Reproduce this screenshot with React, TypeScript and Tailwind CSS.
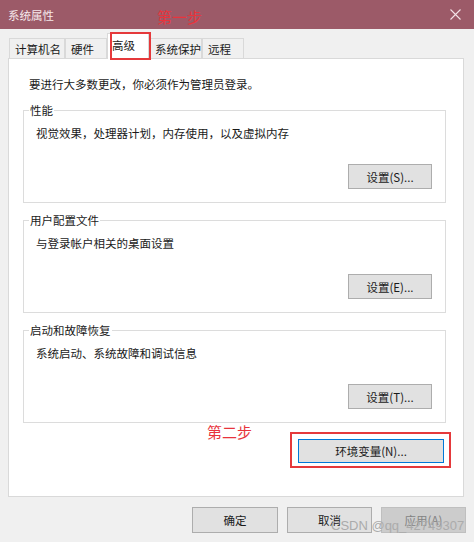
import React from "react";

const FONT = "font-['Noto_Sans_CJK_SC','Microsoft_YaHei',sans-serif]";

function Tab({ label, w, selected }: { label: string; w: string; selected?: boolean }) {
  if (selected) {
    return (
      <div
        className={`relative z-10 -mb-px h-[26px] ${w} bg-white border border-b-0 border-[#d9d9d9] pl-[4px] flex items-center pb-[3px]`}
      >
        <span>{label}</span>
        <div className="absolute left-[2px] -top-[2px] w-[41px] h-[28px] border-2 border-[#e5393b]" />
      </div>
    );
  }
  return (
    <div className={`h-[20px] ${w} bg-[#f0f0f0] border border-b-0 border-[#d9d9d9] pl-[5px] flex items-center`}>
      <span>{label}</span>
    </div>
  );
}

function WinButton({ label, className = "" }: { label: string; className?: string }) {
  return (
    <button
      type="button"
      className={`h-[25px] w-[84px] bg-[#e1e1e1] border border-[#adadad] text-[11.5px] leading-[16px] text-[#1a1a1a] flex items-center justify-center ${className}`}
    >
      {label}
    </button>
  );
}

function GroupBox({ title, text, button, className = "" }: { title: string; text: string; button: string; className?: string }) {
  return (
    <fieldset className={`w-[423px] border border-[#dcdcdc] pb-[13px] flex flex-col ${className}`}>
      <legend className="ml-[5px] px-[1px] leading-[16px]">{title}</legend>
      <p className="mt-[7px] pl-[12px] leading-[16px]">{text}</p>
      <div className="mt-[23px] flex justify-end pr-[13px]">
        <WinButton label={button} />
      </div>
    </fieldset>
  );
}

export default function App() {
  return (
    <div className={`relative w-[474px] h-[542px] overflow-hidden bg-[#f0f0f0] text-[11.5px] text-[#1a1a1a] ${FONT}`}>
      {/* Title bar */}
      <div className="h-[29px] bg-[#9c5a68] flex items-center justify-between pl-[8px] pr-[12px]">
        <span className="text-[#f6e9ec] text-[11.5px] leading-[16px]">系统属性</span>
        <svg width="11" height="11" viewBox="0 0 11 11" className="mr-[1px]">
          <path d="M0.5 0.5 L10.5 10.5 M10.5 0.5 L0.5 10.5" stroke="#f3e2e6" strokeWidth="1.1" fill="none" />
        </svg>
      </div>
      <span className="absolute left-[157px] top-[7px] text-[15px] leading-[20px] text-[#e8343c]">第一步</span>

      {/* Tabs */}
      <div className="h-[29px] pl-[9px] flex items-end leading-[16px]">
        <Tab label="计算机名" w="w-[56px]" />
        <Tab label="硬件" w="w-[42px]" />
        <Tab label="高级" w="w-[42px]" selected />
        <Tab label="系统保护" w="w-[53px]" />
        <Tab label="远程" w="w-[42px]" />
      </div>

      {/* Panel */}
      <div className="ml-[8px] w-[456px] h-[439px] bg-white border border-[#d9d9d9] pl-[14px] pt-[17px] flex flex-col">
        <p className="pl-[6px] leading-[16px]">要进行大多数更改，你必须作为管理员登录。</p>
        <GroupBox className="mt-[10px]" title="性能" text="视觉效果，处理器计划，内存使用，以及虚拟内存" button="设置(S)..." />
        <GroupBox className="mt-[9px]" title="用户配置文件" text="与登录帐户相关的桌面设置" button="设置(E)..." />
        <GroupBox className="mt-[9px]" title="启动和故障恢复" text="系统启动、系统故障和调试信息" button="设置(T)..." />
        <div className="mt-[16px] flex justify-end pr-[19px]">
          <div className="relative">
            <button
              type="button"
              className="h-[24px] w-[146px] bg-[#e1e1e1] border border-[#0078d7] text-[11.5px] leading-[16px] text-[#1a1a1a] flex items-center justify-center"
            >
              环境变量(N)...
            </button>
            <div className="absolute -left-[8px] -right-[7px] -top-[7px] -bottom-[5px] border-2 border-[#e5393b]" />
            <span className="absolute -left-[91px] -top-[17px] text-[15px] leading-[20px] text-[#e8343c] whitespace-nowrap">第二步</span>
          </div>
        </div>
      </div>

      {/* Bottom buttons */}
      <div className="mt-[10px] pr-[8px] flex justify-end gap-[9px]">
        <WinButton label="确定" className="h-[26px] w-[86px]" />
        <WinButton label="取消" className="h-[26px] w-[85px]" />
        <button
          type="button"
          className="h-[26px] w-[85px] bg-[#cccccc] border border-[#bfbfbf] text-[11.5px] leading-[16px] text-[#838383] flex items-center justify-center"
        >
          应用(A)
        </button>
      </div>

      <span className="absolute left-[331px] top-[518px] text-[13px] leading-[16px] text-[#ababab] font-['Liberation_Sans',Arial,sans-serif] whitespace-nowrap">
        CSDN @qq_42749307
      </span>
    </div>
  );
}
